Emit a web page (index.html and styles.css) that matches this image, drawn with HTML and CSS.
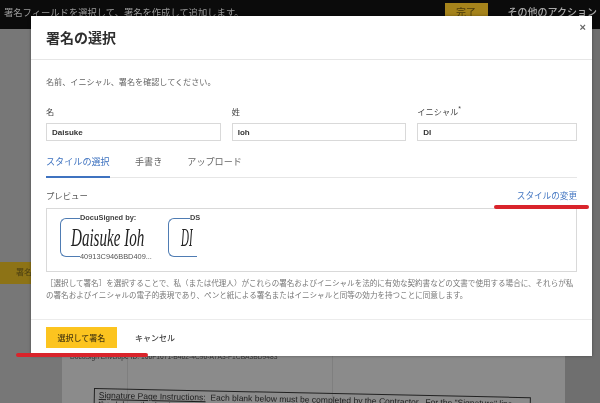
FILE: index.html
```html
<!DOCTYPE html>
<html lang="ja">
<head>
    <meta charset="UTF-8">
    <title>署名の選択</title>
    <link rel="stylesheet" href="styles.css">
</head>
<body>
    <!-- dimmed page behind the dialog -->
    <div class="page">
        <header class="topbar">
            <span class="topbar-text">署名フィールドを選択して、署名を作成して追加します。</span>
            <span class="done-btn">完了</span>
            <span class="more-actions">その他のアクション</span>
        </header>
        <div class="workspace">
            <div class="side">
                <span class="side-tag">署名</span>
            </div>
            <div class="doc">
                <div class="envelope">DocuSign Envelope ID: 166F1671-B462-4C96-A7A3-F1CBA3BD9483</div>
                <div class="instructions"><u>Signature Page Instructions:</u>&nbsp; Each blank below must be completed by the Contractor.&nbsp; For the "Signature" line, the duly authorized</div>
            </div>
            <div class="rail"></div>
        </div>
    </div>

    <!-- Dialog -->
    <div class="modal">
        <div class="modal-head">
            <h1>署名の選択</h1>
            <span class="close">&times;</span>
        </div>
        <div class="modal-body">
            <p class="lead">名前、イニシャル、署名を確認してください。</p>
            <div class="fields">
                <label class="field field-first">名<input type="text" value="Daisuke"></label>
                <label class="field field-last">姓<input type="text" value="Ioh"></label>
                <label class="field field-initial"><span>イニシャル<sup>*</sup></span><input type="text" value="DI"></label>
            </div>
            <div class="tabs">
                <span class="tab tab-active">スタイルの選択</span>
                <span class="tab">手書き</span>
                <span class="tab">アップロード</span>
            </div>
            <div class="preview-head">
                <span>プレビュー</span>
                <a class="change-link">スタイルの変更</a>
            </div>
            <div class="preview">
                <div class="stamp stamp-sign">
                    <div class="stamp-row">
                        <span class="corner corner-top"></span>
                        <span class="stamp-label stamp-label-top">DocuSigned by:</span>
                    </div>
                    <div class="stamp-mid"><span class="signature">Daisuke Ioh</span></div>
                    <div class="stamp-row">
                        <span class="corner corner-bottom"></span>
                        <span class="stamp-label stamp-label-bottom">40913C946BBD409...</span>
                    </div>
                </div>
                <div class="stamp stamp-initial">
                    <div class="stamp-row">
                        <span class="corner corner-top corner-mid"></span>
                        <span class="stamp-label stamp-label-top">DS</span>
                    </div>
                    <div class="stamp-mid"><span class="signature">DI</span></div>
                    <div class="stamp-row">
                        <span class="corner corner-bottom corner-wide"></span>
                    </div>
                </div>
            </div>
            <p class="legal">［選択して署名］を選択することで、私（または代理人）がこれらの署名およびイニシャルを法的に有効な契約書などの文書で使用する場合に、それらが私の署名およびイニシャルの電子的表現であり、ペンと紙による署名またはイニシャルと同等の効力を持つことに同意します。</p>
        </div>
        <div class="modal-foot">
            <button class="primary">選択して署名</button>
            <span class="cancel">キャンセル</span>
        </div>
    </div>

    <!-- red marker lines drawn over the screenshot -->
    <span class="marker marker-link"></span>
    <span class="marker marker-btn"></span>
</body>
</html>
```

FILE: styles.css
```css
* {
    margin: 0;
    padding: 0;
    box-sizing: border-box;
}

body {
    position: relative;
    width: 600px;
    height: 403px;
    overflow: hidden;
    font-family: "Liberation Sans", "Noto Sans CJK JP", sans-serif;
    background-color: #777;
}

/* Page behind the dialog */
.page {
    display: flex;
    flex-direction: column;
    height: 100%;
    filter: blur(0.4px);
}

.topbar {
    display: flex;
    flex: none;
    align-items: flex-start;
    height: 29px;
    background-color: #0b0b0b;
    color: #9a9a9a;
    font-size: 9.3px;
    padding: 3px 3px 0 4px;
}

.topbar-text {
    flex: 1;
    line-height: 20px;
}

.done-btn {
    width: 43px;
    height: 20px;
    margin-right: 20px;
    background-color: #a5831b;
    color: #4a3b0c;
    text-align: center;
    font-size: 10px;
    line-height: 20px;
}

.more-actions {
    color: #a8a8a8;
    font-size: 10px;
    font-weight: 500;
    line-height: 20px;
}

.workspace {
    display: flex;
    flex: 1;
    min-height: 0;
    overflow: hidden;
}

.side {
    width: 62px;
    background-color: #777;
    padding-top: 233px;
}

.side-tag {
    display: block;
    width: 31px;
    height: 22px;
    background-color: #8d7316;
    color: #4d4012;
    font-size: 8px;
    line-height: 22px;
    padding-left: 16px;
    white-space: nowrap;
    overflow: hidden;
}

.doc {
    flex: 1;
    background-color: #8b8b8b;
    /* faint column rules on the page */
    background-image: linear-gradient(#7f7f7f, #7f7f7f), linear-gradient(#7f7f7f, #7f7f7f);
    background-size: 1px 100%;
    background-position: 65px 0, 270px 0;
    background-repeat: no-repeat;
    color: #2a2a2a;
    padding: 323px 0 0 8px;
}

.rail {
    width: 35px;
    background-color: #6f6f6f;
}

.envelope {
    font-size: 6.7px;
    line-height: 10px;
    color: #333;
}

.instructions {
    width: 437px;
    margin: 26px 0 0 24px;
    border: 1px solid #222;
    padding: 2px 4px;
    font-size: 8.5px;
    line-height: 9px;
    color: #1c1c1c;
    transform: rotate(1.2deg);
    transform-origin: left top;
}

/* Dialog */
.modal {
    position: absolute;
    left: 31px;
    top: 16px;
    width: 561px;
    height: 340px;
    display: flex;
    flex-direction: column;
    background-color: #fff;
    box-shadow: 0 0 3px rgba(0, 0, 0, 0.35);
    color: #333;
    filter: blur(0.3px);
}

.modal-head {
    display: flex;
    justify-content: space-between;
    height: 44px;
    padding: 12px 6px 0 15px;
    border-bottom: 1px solid #e6e6e6;
}

h1 {
    font-size: 14px;
    font-weight: bold;
    line-height: 20px;
    color: #2f2f2f;
}

.close {
    font-size: 11px;
    font-weight: bold;
    line-height: 11px;
    margin-top: -6px;
    color: #666;
}

.modal-body {
    flex: 1;
    padding: 0 15px;
}

.lead {
    margin-top: 16px;
    font-size: 8.1px;
    line-height: 14px;
    color: #666;
}

.fields {
    display: flex;
    gap: 11px;
    margin-top: 16px;
}

.field {
    display: flex;
    flex-direction: column;
    font-size: 8.2px;
    line-height: 14px;
    color: #444;
}

.field input {
    height: 18px;
    margin-top: 3px;
    padding: 0 5px;
    border: 1px solid #d9d9d9;
    font-family: "Liberation Sans", sans-serif;
    font-size: 8px;
    font-weight: bold;
    color: #333;
    background-color: #fff;
}

.field sup {
    font-size: 7px;
    line-height: 0;
}

.field-first,
.field-last {
    width: 175px;
}

.field-initial {
    width: 160px;
}

.tabs {
    display: flex;
    gap: 25px;
    height: 37px;
    padding-top: 10px;
    border-bottom: 1px solid #e6e6e6;
    font-size: 9.1px;
    line-height: 22px;
    color: #666;
}

.tab-active {
    width: 64px;
    height: 27px;
    border-bottom: 2px solid #3f73c0;
    color: #3f73c0;
    white-space: nowrap;
}

.preview-head {
    display: flex;
    justify-content: space-between;
    margin-top: 11px;
    font-size: 8.4px;
    line-height: 14px;
    color: #555;
}

.change-link {
    font-size: 8.6px;
    color: #4477c2;
}

.preview {
    display: flex;
    gap: 14px;
    height: 64px;
    margin-top: 5px;
    padding: 9px 0 0 13px;
    border: 1px solid #d9d9d9;
}

/* Signature stamps */
.stamp-sign {
    width: 94px;
}

.stamp-initial {
    width: 36px;
}

.stamp-row {
    display: flex;
    height: 6px;
}

.corner {
    display: block;
    width: 20px;
    height: 6px;
    border: 0 solid #4f7cb3;
    border-left-width: 1.5px;
}

.corner-top {
    border-top-width: 1.5px;
    border-top-left-radius: 7px;
}

.corner-bottom {
    border-bottom-width: 1.5px;
    border-bottom-left-radius: 7px;
}

.corner-mid {
    width: 22px;
}

.corner-wide {
    width: 29px;
}

.stamp-label {
    font-size: 7.4px;
    font-weight: bold;
    line-height: 8px;
    color: #444;
    white-space: nowrap;
    height: 8px;
}

.stamp-label-top {
    margin-top: -4px;
}

.stamp-label-bottom {
    margin-top: 2px;
    font-weight: normal;
    color: #555;
}

.stamp-mid {
    height: 27px;
    border-left: 1.5px solid #4f7cb3;
    padding-left: 10px;
}

.stamp-initial .stamp-mid {
    padding-left: 12px;
}

.signature {
    display: inline-block;
    font-family: "Liberation Serif", serif;
    font-style: italic;
    font-size: 26px;
    line-height: 27px;
    color: #222;
    white-space: nowrap;
    transform: scaleX(0.58);
    transform-origin: left center;
}

.stamp-initial .signature {
    transform: scaleX(0.42);
}

.legal {
    margin-top: 6px;
    font-size: 7.55px;
    line-height: 12px;
    color: #777;
}

.modal-foot {
    display: flex;
    align-items: center;
    gap: 18px;
    height: 37px;
    padding: 0 15px 1px;
    border-top: 1px solid #ececec;
}

.primary {
    width: 71px;
    height: 21px;
    border: none;
    background-color: #fcc41f;
    color: #4d3d10;
    font-family: inherit;
    font-size: 8px;
    font-weight: 500;
}

.cancel {
    font-size: 8px;
    font-weight: 500;
    color: #444;
}

/* Red markers */
.marker {
    position: absolute;
    height: 4px;
    border-radius: 2px;
    background-color: #d9242b;
}

.marker-link {
    left: 494px;
    top: 205px;
    width: 95px;
}

.marker-btn {
    left: 16px;
    top: 353px;
    width: 132px;
}
```
